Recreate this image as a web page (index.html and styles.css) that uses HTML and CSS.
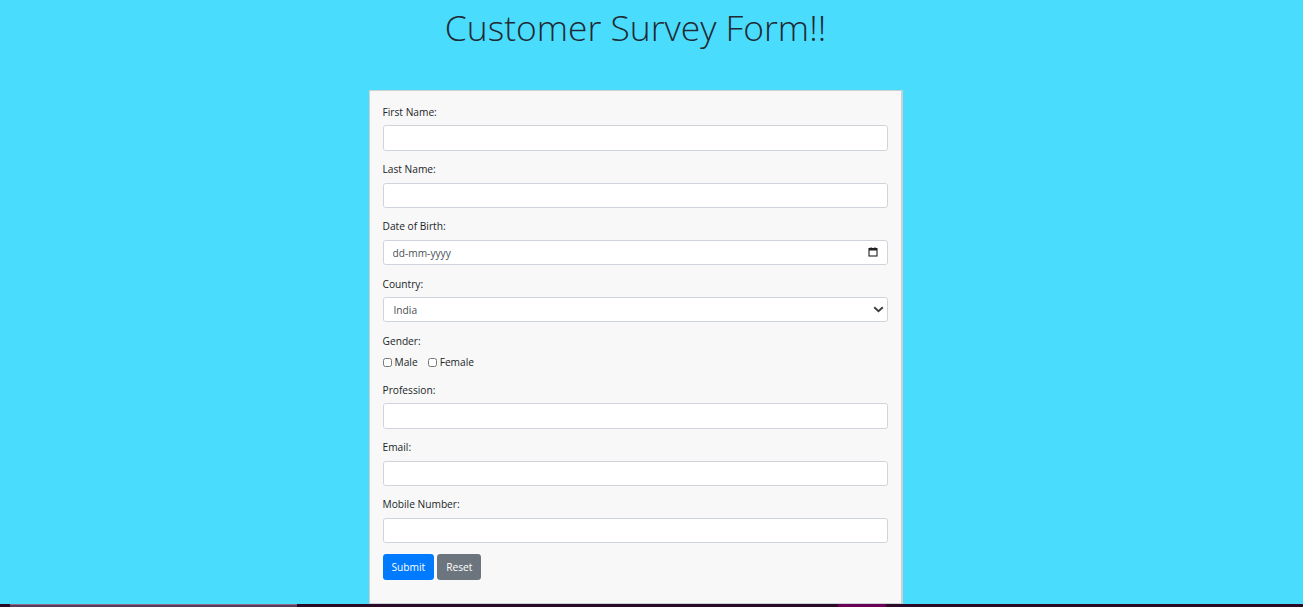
FILE: index.html
```html
<!DOCTYPE html>
<html lang="en">
<head>
<meta charset="utf-8">
<title>Customer Survey Form</title>
<link rel="stylesheet" href="styles.css">
</head>
<body>
<div class="page">
  <h1 class="title">Customer Survey Form!!</h1>
  <form class="survey">
    <div class="group">
      <label class="lbl" for="fn">First Name:</label>
      <input class="ctl" id="fn" type="text">
    </div>
    <div class="group">
      <label class="lbl" for="ln">Last Name:</label>
      <input class="ctl" id="ln" type="text">
    </div>
    <div class="group">
      <label class="lbl" for="dob">Date of Birth:</label>
      <div class="field">
        <input class="ctl" id="dob" type="text" placeholder="dd-mm-yyyy">
        <svg class="cal" width="10" height="10" viewBox="0 0 10 10"><rect x="1" y="1.5" width="8" height="7.5" fill="none" stroke="#222" stroke-width="1.1"/><rect x="1" y="1.5" width="8" height="2" fill="#222"/><rect x="2.6" y="0.3" width="1" height="1.5" fill="#222"/><rect x="6.4" y="0.3" width="1" height="1.5" fill="#222"/></svg>
      </div>
    </div>
    <div class="group">
      <label class="lbl" for="country">Country:</label>
      <div class="field">
        <select class="ctl sel" id="country">
          <option>India</option>
          <option>USA</option>
          <option>UK</option>
        </select>
        <svg class="chev" width="11" height="7" viewBox="0 0 11 7"><path d="M1.2 1.2 L5.5 5.3 L9.8 1.2" fill="none" stroke="#3c4043" stroke-width="1.9"/></svg>
      </div>
    </div>
    <div class="group">
      <div class="lbl">Gender:</div>
      <div class="checks">
        <label class="chk"><input type="checkbox"> Male</label>
        <label class="chk"><input type="checkbox"> Female</label>
      </div>
    </div>
    <div class="group">
      <label class="lbl" for="prof">Profession:</label>
      <input class="ctl" id="prof" type="text">
    </div>
    <div class="group">
      <label class="lbl" for="em">Email:</label>
      <input class="ctl" id="em" type="email">
    </div>
    <div class="group">
      <label class="lbl" for="mob">Mobile Number:</label>
      <input class="ctl" id="mob" type="tel">
    </div>
    <div class="actions">
      <button type="submit" class="btn btn-primary">Submit</button>
      <button type="reset" class="btn btn-secondary">Reset</button>
    </div>
  </form>
</div>
<div class="taskbar">
  <div class="tb-item tb-wide"></div>
  <div class="tb-item tb-pink"></div>
</div>
</body>
</html>
```

FILE: styles.css
```css
* { box-sizing: border-box; }
html, body { margin: 0; padding: 0; }
body {
  background: #4adcfd;
  font-family: "Open Sans", "Noto Sans", Arial, sans-serif;
  color: #212529;
  height: 607px;
  overflow: hidden;
}
.page {
  padding-right: 32px;
}
.title {
  margin: 0;
  text-align: center;
  font-weight: 300;
  font-size: 35.4px;
  line-height: 54px;
  color: #1f2a33;
}
.survey {
  width: 534px;
  margin: 36px auto 0;
  background: #f8f8f8;
  border: 1px solid #c9d1d6;
  border-right-width: 2px;
  padding: 13px 13px 23px 13px;
}
.group {
  margin-bottom: 10.3px;
}
.lbl {
  display: block;
  font-size: 10.2px;
  line-height: 16px;
  margin-bottom: 5.4px;
  color: #212529;
}
.ctl {
  display: block;
  width: 100%;
  height: 25.5px;
  border: 1px solid #ced4da;
  border-radius: 2.7px;
  background: #fff;
  padding: 0 9px;
  font-family: inherit;
  font-size: 10.2px;
  color: #495057;
  outline: none;
}
.ctl::placeholder { color: #495057; opacity: 1; }
.field { position: relative; }
.cal { position: absolute; right: 10px; top: 7.5px; }
.sel {
  appearance: none;
  -webkit-appearance: none;
  padding-left: 10px;
}
.chev { position: absolute; right: 4px; top: 9.5px; }
.checks {
  display: flex;
  gap: 10px;
  height: 17.6px;
  padding-bottom: 1.6px;
  align-items: center;
}
.chk {
  display: flex;
  align-items: center;
  gap: 3px;
  font-size: 10.2px;
  line-height: 16px;
  color: #212529;
}
.chk input {
  margin: 0;
  width: 9px;
  height: 9px;
}
.actions {
  display: flex;
  gap: 3px;
  padding-top: 0.8px;
}
.btn {
  font-family: inherit;
  font-size: 10.2px;
  line-height: 16px;
  height: 26px;
  padding: 0 8px;
  border-radius: 2.7px;
  border: 1px solid transparent;
  color: #fff;
  cursor: pointer;
}
.btn-primary { background: #007bff; border-color: #007bff; }
.btn-secondary { background: #6c757d; border-color: #6c757d; }
.taskbar {
  position: fixed;
  left: 0;
  right: 0;
  bottom: 0;
  height: 3px;
  background: #2a0a26;
}
.tb-item { position: absolute; top: 0; height: 3px; }
.tb-wide { left: 10px; width: 287px; background: #5c3a5c; border-top: 1px solid #8a6c8a; }
.tb-pink { left: 838px; width: 48px; background: #6a0056; }
```
